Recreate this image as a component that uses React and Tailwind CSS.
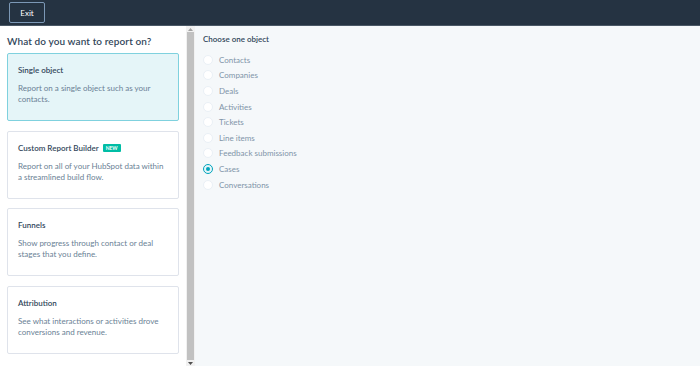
import React, { useState } from "react";

const reportTypes = [
  {
    title: "Single object",
    desc: "Report on a single object such as your contacts.",
  },
  {
    title: "Custom Report Builder",
    badge: "NEW",
    desc: "Report on all of your HubSpot data within a streamlined build flow.",
  },
  {
    title: "Funnels",
    desc: "Show progress through contact or deal stages that you define.",
  },
  {
    title: "Attribution",
    desc: "See what interactions or activities drove conversions and revenue.",
  },
];

const objects = [
  "Contacts",
  "Companies",
  "Deals",
  "Activities",
  "Tickets",
  "Line items",
  "Feedback submissions",
  "Cases",
  "Conversations",
];

export default function App() {
  const [selectedType, setSelectedType] = useState(0);
  const [selectedObject, setSelectedObject] = useState("Cases");

  return (
    <div
      className="w-[700px] h-[366px] flex flex-col overflow-hidden bg-[#f5f8fa] text-[#33475b]"
      style={{ fontFamily: "Lato, 'Open Sans', sans-serif" }}
    >
      {/* top bar */}
      <div className="h-[26px] shrink-0 bg-[#253342] border-b border-[#4a5866] flex items-center pl-[9px]">
        <button className="h-[21px] w-[36px] border border-[#7c98b6] rounded-[2px] text-white text-[8px]">
          Exit
        </button>
      </div>

      <div className="flex flex-1 min-h-0">
        {/* left column */}
        <div className="w-[186px] bg-white flex flex-col px-[7px] pt-[8px]">
          <h1 className="text-[10px] font-semibold text-[#33475b] leading-[14px] mb-[5px] tracking-[0.1px]">
            What do you want to report on?
          </h1>
          <div className="flex flex-col gap-[9.5px]">
            {reportTypes.map((t, i) => {
              const active = selectedType === i;
              return (
                <div
                  key={t.title}
                  onClick={() => setSelectedType(i)}
                  className={`h-[68px] w-[172px] px-[10px] pt-[10px] border rounded-[2px] cursor-pointer ${
                    active
                      ? "bg-[#e5f5f8] border-[#7fd1de] border-[1.5px]"
                      : "bg-white border-[#dfe3eb]"
                  }`}
                >
                  <div className="flex items-center gap-[4px] h-[12px] text-[8px] font-semibold text-[#33475b]">
                    {t.title}
                    {t.badge && (
                      <span className="bg-[#00bda5] text-white text-[5px] font-bold px-[3px] h-[8px] leading-[8px] rounded-[1px]">
                        {t.badge}
                      </span>
                    )}
                  </div>
                  <p className="mt-[7px] text-[8px] leading-[11px] text-[#6a7f95] pr-[4px]">
                    {t.desc}
                  </p>
                </div>
              );
            })}
          </div>
        </div>

        {/* scrollbar */}
        <div className="w-[9px] bg-[#f1f1f1] flex flex-col items-center">
          <div className="h-[6px] flex items-center justify-center">
            <svg width="5" height="3" viewBox="0 0 5 3">
              <path d="M0 3 L2.5 0 L5 3 Z" fill="#a3a3a3" />
            </svg>
          </div>
          <div className="w-[7px] flex-1 bg-[#c1c1c1]" />
          <div className="h-[6px] flex items-center justify-center">
            <svg width="5" height="3" viewBox="0 0 5 3">
              <path d="M0 0 L2.5 3 L5 0 Z" fill="#505050" />
            </svg>
          </div>
        </div>

        {/* right column */}
        <div className="flex-1 pl-[8px] pt-[7px]">
          <h2 className="text-[8px] font-semibold text-[#33475b] leading-[12px] mb-[7px]">
            Choose one object
          </h2>
          <div className="flex flex-col">
            {objects.map((o) => {
              const checked = selectedObject === o;
              return (
                <label
                  key={o}
                  onClick={() => setSelectedObject(o)}
                  className="h-[15.6px] flex items-center gap-[6px] cursor-pointer"
                >
                  <span
                    className={`w-[10px] h-[10px] rounded-full border flex items-center justify-center ${
                      checked
                        ? "border-[#00a4bd] bg-[#e5f5f8]"
                        : "border-[#eaf0f6] bg-white"
                    }`}
                  >
                    {checked && (
                      <span className="w-[4px] h-[4px] rounded-full bg-[#00a4bd]" />
                    )}
                  </span>
                  <span className="text-[8px] text-[#8094a8]">{o}</span>
                </label>
              );
            })}
          </div>
        </div>
      </div>
    </div>
  );
}
